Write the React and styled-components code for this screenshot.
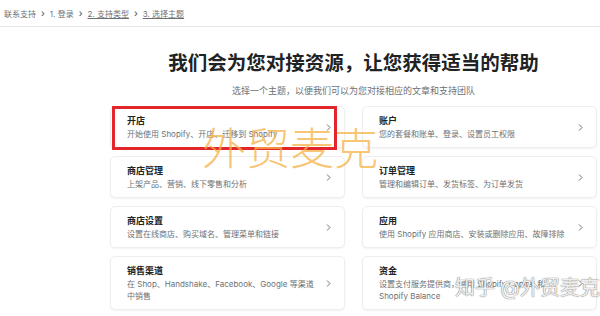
import React from "react";
import styled, { createGlobalStyle } from "styled-components";

const Global = createGlobalStyle`
  body {
    margin: 0;
    background: #fff;
    font-family: Inter, "Noto Sans CJK SC", sans-serif;
    color: #202223;
  }
`;

const Page = styled.div`
  position: relative;
  width: 600px;
  height: 316px;
  overflow: hidden;
`;

const Crumbs = styled.div`
  display: flex;
  align-items: center;
  gap: 4px;
  height: 26px;
  padding-left: 4px;
  border-bottom: 1px solid #e4e5e7;
  font-size: 8px;
  color: #6d7175;
`;

const Crumb = styled.span`
  text-decoration: ${p => (p.link ? "underline" : "none")};
`;

const Sep = styled.span`
  font-size: 10px;
  color: #44474a;
  margin: 0 1px;
`;

const Main = styled.div`
  margin-left: 110px;
  width: 487px;
`;

const Heading = styled.h1`
  margin: 22px 0 0;
  text-align: center;
  font-size: 19.5px;
  line-height: 28px;
  font-weight: 700;
  color: #202223;
`;

const Sub = styled.p`
  margin: 8px 0 0;
  text-align: center;
  font-size: 9px;
  line-height: 12px;
  color: #6d7175;
`;

const Grid = styled.div`
  margin-top: 9px;
  display: grid;
  grid-template-columns: 235px 235px;
  column-gap: 17px;
  row-gap: 8px;
`;

const Card = styled.div`
  position: relative;
  display: flex;
  align-items: center;
  padding: 7px 12px 7px 16px;
  border: 1px solid #eceef0;
  border-radius: 5px;
  box-shadow: 0 1px 2px rgba(0, 0, 0, 0.05);
  background: #fff;
`;

const Text = styled.div`
  flex: 1;
  margin-right: 10px;
`;

const Title = styled.div`
  font-size: 9px;
  line-height: 13px;
  font-weight: 700;
  color: #202223;
`;

const Desc = styled.div`
  margin-top: 1px;
  font-size: 8px;
  line-height: 12px;
  color: #6d7175;
`;

const Highlight = styled.div`
  position: absolute;
  left: 1px;
  top: -1px;
  width: 219px;
  height: 38px;
  border: 3px solid #e3262b;
  pointer-events: none;
`;

const Mark = styled.div`
  position: absolute;
  left: 202px;
  top: 118px;
  font-size: 44px;
  line-height: 62px;
  font-weight: 300;
  color: rgba(246, 178, 70, 0.75);
  pointer-events: none;
`;

const Zhihu = styled.div`
  position: absolute;
  left: 455px;
  top: 274px;
  font-size: 20px;
  line-height: 28px;
  color: rgba(255, 255, 255, 0.9);
  text-shadow: 0 0 1px #7b7b7b, 0 0 1px #7b7b7b;
  pointer-events: none;
`;

const Chevron = () => (
  <svg width="7" height="9" viewBox="0 0 7 9">
    <path d="M2 1.5 L5 4.5 L2 7.5" fill="none" stroke="#6d7175" strokeWidth="1" />
  </svg>
);

const topics = [
  { t: "开店", d: "开始使用 Shopify、开店、迁移到 Shopify", mark: true },
  { t: "账户", d: "您的套餐和账单、登录、设置员工权限" },
  { t: "商店管理", d: "上架产品、营销、线下零售和分析" },
  { t: "订单管理", d: "管理和编辑订单、发货标签、为订单发货" },
  { t: "商店设置", d: "设置在线商店、购买域名、管理菜单和链接" },
  { t: "应用", d: "使用 Shopify 应用商店、安装或删除应用、故障排除" },
  { t: "销售渠道", d: "在 Shop、Handshake、Facebook、Google 等渠道中销售" },
  { t: "资金", d: "设置支付服务提供商，使用 Shopify Capital 和 Shopify Balance" },
];

export default function App() {
  return (
    <Page>
      <Global />
      <Crumbs>
        <Crumb>联系支持</Crumb>
        <Sep>›</Sep>
        <Crumb>1. 登录</Crumb>
        <Sep>›</Sep>
        <Crumb link>2. 支持类型</Crumb>
        <Sep>›</Sep>
        <Crumb link>3. 选择主题</Crumb>
      </Crumbs>
      <Main>
        <Heading>我们会为您对接资源，让您获得适当的帮助</Heading>
        <Sub>选择一个主题，以便我们可以为您对接相应的文章和支持团队</Sub>
        <Grid>
          {topics.map(x => (
            <Card key={x.t}>
              <Text>
                <Title>{x.t}</Title>
                <Desc>{x.d}</Desc>
              </Text>
              <Chevron />
              {x.mark && <Highlight />}
            </Card>
          ))}
        </Grid>
      </Main>
      <Mark>外贸麦克</Mark>
      <Zhihu>知乎 @外贸麦克</Zhihu>
    </Page>
  );
}
